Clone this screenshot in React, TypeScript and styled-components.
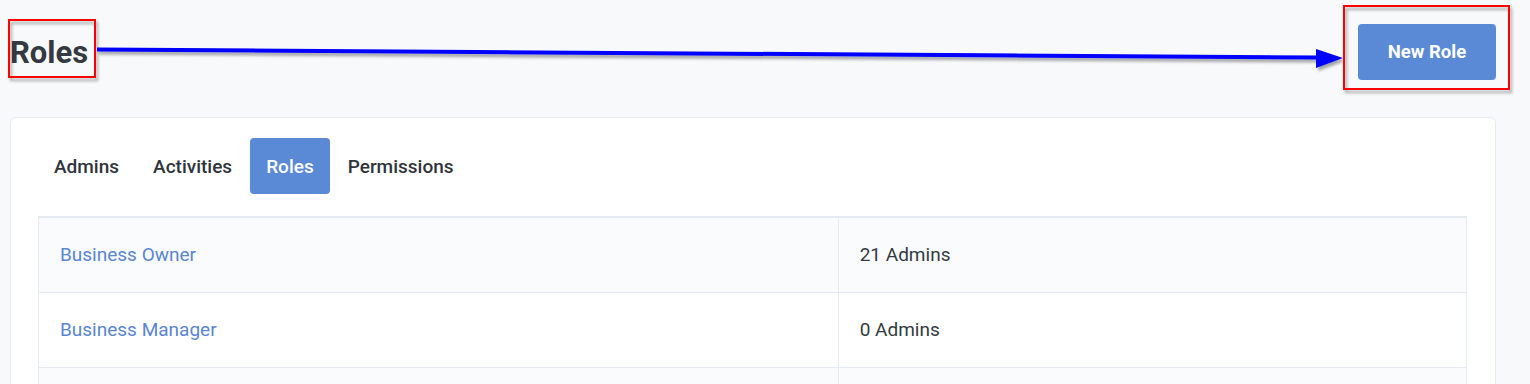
import styled, { createGlobalStyle } from 'styled-components';

const GlobalStyle = createGlobalStyle`
  html, body {
    margin: 0;
    padding: 0;
    background: #f8f9fb;
    font-family: Roboto, 'Liberation Sans', Arial, sans-serif;
    color: #343a40;
  }
`;

const tabs = ['Admins', 'Activities', 'Roles', 'Permissions'];

const roles = [
  { name: 'Business Owner', admins: 21 },
  { name: 'Business Manager', admins: 0 },
];

export default function App() {
  return (
    <Page>
      <GlobalStyle />
      <Header>
        <Title>Roles</Title>
        <PrimaryButton type="button">New Role</PrimaryButton>
      </Header>

      <Card>
        <TabList>
          {tabs.map((t) => (
            <Tab key={t} active={t === 'Roles'}>
              {t}
            </Tab>
          ))}
        </TabList>

        <Table>
          <tbody>
            {roles.map((r, i) => (
              <Row key={r.name} striped={i % 2 === 0}>
                <NameCell>
                  <RoleLink href="#">{r.name}</RoleLink>
                </NameCell>
                <Cell>{r.admins} Admins</Cell>
              </Row>
            ))}
            {/* next row runs off the bottom of the view */}
            <Row striped>
              <NameCell />
              <Cell />
            </Row>
          </tbody>
        </Table>
      </Card>

      {/* screenshot annotations drawn on top */}
      <Annotations width="1530" height="384" viewBox="0 0 1530 384">
        <defs>
          <filter id="shade" x="-5%" y="-50%" width="110%" height="200%">
            <feDropShadow dx="2" dy="3" stdDeviation="1.5" floodColor="#000" floodOpacity="0.35" />
          </filter>
        </defs>
        <g filter="url(#shade)">
          <rect x="9" y="20" width="86" height="57" fill="none" stroke="#ff0000" strokeWidth="2" />
          <rect x="1344" y="6" width="165" height="83" fill="none" stroke="#ff0000" strokeWidth="2" />
          <line x1="97" y1="49.5" x2="1318" y2="57.5" stroke="#0000ff" strokeWidth="4" />
          <polygon points="1316,49 1343,58 1316,68" fill="#0000ff" />
        </g>
      </Annotations>
    </Page>
  );
}

const Page = styled.div`
  position: relative;
  width: 1530px;
  height: 384px;
  overflow: hidden;
`;

const Header = styled.div`
  display: flex;
  align-items: center;
  justify-content: space-between;
  height: 56px;
  padding: 24px 34px 0 10px;
`;

const Title = styled.h1`
  margin: 0;
  font-size: 31px;
  font-weight: 700;
  color: #343a40;
  line-height: 1;
`;

const PrimaryButton = styled.button`
  width: 138px;
  height: 56px;
  border: none;
  border-radius: 4px;
  background: #5a8ad6;
  color: #fff;
  font-family: inherit;
  font-size: 18.5px;
  font-weight: 700;
  cursor: pointer;
`;

const Card = styled.div`
  margin: 37px 34px 0 10px;
  padding: 20px 28px 20px 27px;
  background: #fff;
  border: 1px solid #e6ebf3;
  border-radius: 6px;
`;

const TabList = styled.div`
  display: flex;
  gap: 2px;
  margin-bottom: 22px;
`;

const Tab = styled.div<{ active?: boolean }>`
  display: flex;
  align-items: center;
  height: 56px;
  padding: 0 16px;
  border-radius: 4px;
  font-size: 19px;
  font-weight: 500;
  color: ${(p) => (p.active ? '#fff' : '#2f343a')};
  background: ${(p) => (p.active ? '#5a8ad6' : 'transparent')};
`;

const Table = styled.table`
  width: 100%;
  border-collapse: collapse;
  border: 1px solid #e6ebf3;
  border-top: 2px solid #e6ebf3;
  font-size: 19px;
`;

const Row = styled.tr<{ striped?: boolean }>`
  height: 75px;
  background: ${(p) => (p.striped ? '#f9fbfd' : '#fff')};
  border-bottom: 1px solid #e6ebf3;
`;

const Cell = styled.td`
  padding: 0 21px;
  color: #343a40;
`;

const NameCell = styled(Cell)`
  width: 56%;
  border-right: 1px solid #e6ebf3;
`;

const RoleLink = styled.a`
  color: #5a85d1;
  text-decoration: none;
`;

const Annotations = styled.svg`
  position: absolute;
  top: 0;
  left: 0;
  pointer-events: none;
`;
